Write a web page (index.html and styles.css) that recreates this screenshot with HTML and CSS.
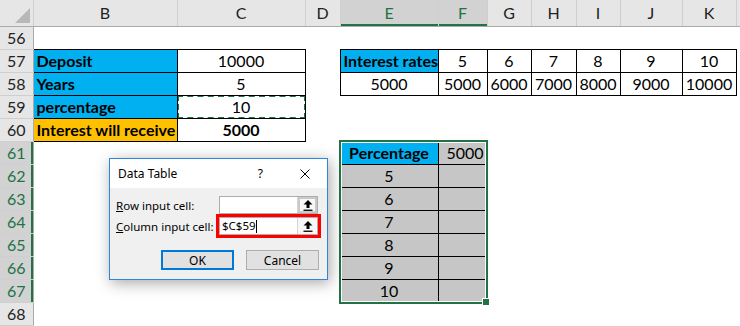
FILE: index.html
```html
<!DOCTYPE html>
<html>
<head>
  <title>Data Table</title>
  <link rel="stylesheet" href="styles.css">
</head>
<body>

  <div class="sheet">
    <table class="grid">
      <colgroup>
        <col class="w-hd"><col class="w-b"><col class="w-c"><col class="w-d"><col class="w-e"><col class="w-f">
        <col class="w-g"><col class="w-h"><col class="w-i"><col class="w-j"><col class="w-k"><col class="w-end">
      </colgroup>
      <tr class="cols">
        <th class="corner"><svg width="33" height="26" viewBox="0 0 33 26"><polygon points="30,8 30,23 15,23" fill="#b8b8b8"/></svg></th>
        <th>B</th><th>C</th><th>D</th><th class="sel">E</th><th class="sel">F</th>
        <th>G</th><th>H</th><th>I</th><th>J</th><th>K</th><th class="end"></th>
      </tr>
      <tr>
        <th class="rh">56</th>
        <td></td><td></td><td></td><td></td><td></td><td></td><td></td><td></td><td></td><td></td><td></td>
      </tr>
      <tr>
        <th class="rh">57</th>
        <td class="bx cyan left">Deposit</td><td class="bx">10000</td><td></td>
        <td class="bx cyan left">Interest rates</td><td class="bx">5</td><td class="bx">6</td><td class="bx">7</td><td class="bx">8</td><td class="bx">9</td><td class="bx">10</td><td></td>
      </tr>
      <tr>
        <th class="rh">58</th>
        <td class="bx cyan left">Years</td><td class="bx">5</td><td></td>
        <td class="bx">5000</td><td class="bx">5000</td><td class="bx">6000</td><td class="bx">7000</td><td class="bx">8000</td><td class="bx">9000</td><td class="bx">10000</td><td></td>
      </tr>
      <tr>
        <th class="rh">59</th>
        <td class="bx cyan left">percentage</td><td class="bx ants">10</td><td></td>
        <td></td><td></td><td></td><td></td><td></td><td></td><td></td><td></td>
      </tr>
      <tr>
        <th class="rh">60</th>
        <td class="bx orange left">Interest will receive</td><td class="bx bold">5000</td><td></td>
        <td></td><td></td><td></td><td></td><td></td><td></td><td></td><td></td>
      </tr>
      <tr>
        <th class="rh on">61</th>
        <td></td><td></td><td></td>
        <td class="bx cyan">Percentage</td><td class="bx shade right">5000</td>
        <td></td><td></td><td></td><td></td><td></td><td></td>
      </tr>
      <tr>
        <th class="rh on">62</th>
        <td></td><td></td><td></td>
        <td class="bx shade">5</td><td class="bx shade"></td>
        <td></td><td></td><td></td><td></td><td></td><td></td>
      </tr>
      <tr>
        <th class="rh on">63</th>
        <td></td><td></td><td></td>
        <td class="bx shade">6</td><td class="bx shade"></td>
        <td></td><td></td><td></td><td></td><td></td><td></td>
      </tr>
      <tr>
        <th class="rh on">64</th>
        <td></td><td></td><td></td>
        <td class="bx shade">7</td><td class="bx shade"></td>
        <td></td><td></td><td></td><td></td><td></td><td></td>
      </tr>
      <tr>
        <th class="rh on">65</th>
        <td></td><td></td><td></td>
        <td class="bx shade">8</td><td class="bx shade"></td>
        <td></td><td></td><td></td><td></td><td></td><td></td>
      </tr>
      <tr>
        <th class="rh on">66</th>
        <td></td><td></td><td></td>
        <td class="bx shade">9</td><td class="bx shade"></td>
        <td></td><td></td><td></td><td></td><td></td><td></td>
      </tr>
      <tr>
        <th class="rh on">67</th>
        <td></td><td></td><td></td>
        <td class="bx shade">10</td><td class="bx shade"></td>
        <td></td><td></td><td></td><td></td><td></td><td></td>
      </tr>
      <tr>
        <th class="rh">68</th>
        <td></td><td></td><td></td><td></td><td></td><td></td><td></td><td></td><td></td><td></td><td></td>
      </tr>
    </table>

    <!-- selected range E61:F67 -->
    <div class="range"><span class="handle"></span></div>

    <!-- Data Table dialog -->
    <div class="dialog">
      <div class="dlg-title">
        <span class="dlg-name">Data Table</span>
        <span class="dlg-help">?</span>
        <svg class="dlg-close" width="10" height="10" viewBox="0 0 10 10"><path d="M0.5 0.5 L9.5 9.5 M9.5 0.5 L0.5 9.5" stroke="#000" stroke-width="1" fill="none"/></svg>
      </div>
      <div class="dlg-body">
        <div class="dlg-row">
          <label><u>R</u>ow input cell:</label>
          <div class="field">
            <span class="val"></span>
            <span class="pick pick-on"><svg width="10" height="11" viewBox="0 0 10 11"><path d="M5 0 L9.5 4.5 H6.5 V8 H3.5 V4.5 H0.5 Z" fill="#000"/><rect x="0.5" y="9.6" width="9" height="1.3" fill="#000"/></svg></span>
          </div>
        </div>
        <div class="dlg-row">
          <label><u>C</u>olumn input cell:</label>
          <div class="field marked">
            <span class="val">$C$59<i class="caret"></i></span>
            <span class="pick"><svg width="10" height="11" viewBox="0 0 10 11"><path d="M5 0 L9.5 4.5 H6.5 V8 H3.5 V4.5 H0.5 Z" fill="#000"/><rect x="0.5" y="9.6" width="9" height="1.3" fill="#000"/></svg></span>
          </div>
        </div>
        <div class="dlg-btns">
          <button type="button" class="btn ok">OK</button>
          <button type="button" class="btn">Cancel</button>
        </div>
      </div>
    </div>
  </div>

</body>
</html>
```

FILE: styles.css
```css
body {
  margin: 0;
  overflow: hidden;
  background-color: #fff;
  font-family: Lato, "Liberation Sans", sans-serif;
  color: #000;
}

.sheet {
  position: relative;
  width: 740px;
  height: 326px;
  overflow: hidden;
}

/* worksheet grid */
.grid {
  border-collapse: collapse;
  table-layout: fixed;
  width: 740px;
  font-size: 16px;
}

.w-hd { width: 33px; }
.w-b { width: 144px; }
.w-c { width: 128px; }
.w-d { width: 35px; }
.w-e { width: 98px; }
.w-f { width: 49px; }
.w-g { width: 44px; }
.w-h { width: 45px; }
.w-i { width: 44px; }
.w-j { width: 62px; }
.w-k { width: 54px; }
.w-end { width: 4px; }

.grid tr {
  height: 23px;
}

.grid th,
.grid td {
  padding: 0 3px;
  line-height: 20px;
  text-align: center;
  font-weight: normal;
  white-space: nowrap;
  overflow: hidden;
}

.grid .cols {
  height: 26px;
}

.cols th {
  background-color: #e6e6e6;
  color: #222;
  border-right: 1px solid #cfcfcf;
  border-bottom: 1px solid #ababab;
}

.cols th.corner {
  padding: 0;
  line-height: 0;
}

.cols th.sel {
  background-color: #d2d2d2;
  color: #217346;
  box-shadow: inset 0 -2px 0 #217346;
}

.cols th.end {
  border-right: none;
}

.rh {
  padding: 0;
  background-color: #e6e6e6;
  color: #222;
  border-bottom: 1px solid #cfcfcf;
  border-right: 1px solid #ababab;
}

.rh.on {
  background-color: #d2d2d2;
  color: #217346;
  box-shadow: inset -2px 0 0 #217346;
}

/* cell formats */
.grid td.bx {
  border: 1px solid #000;
}

.grid td.cyan {
  background-color: #00b0f0;
  font-weight: bold;
}

.grid td.orange {
  background-color: #ffc000;
  font-weight: bold;
}

.grid td.left {
  text-align: left;
  padding-left: 3px;
  padding-right: 0;
}

.grid td.right {
  text-align: right;
}

.grid td.shade {
  background-color: #c6c6c6;
}

.grid td.bold {
  font-weight: bold;
}

/* copy marquee on C59 */
.ants {
  position: relative;
}

.ants::before,
.ants::after {
  content: "";
  position: absolute;
  top: -1px;
  left: -1px;
  right: -1px;
  bottom: -1px;
}

.ants::before {
  border: 2px solid #fff;
}

.ants::after {
  border: 2px dashed #217346;
}

/* selection E61:F67 */
.range {
  position: absolute;
  left: 339px;
  top: 140px;
  width: 149px;
  height: 164px;
  box-sizing: border-box;
  border: 2px solid #217346;
  box-shadow: inset 0 0 0 1px #fff;
}

.handle {
  position: absolute;
  right: -4px;
  bottom: -4px;
  width: 6px;
  height: 6px;
  background-color: #217346;
  border: 1px solid #fff;
}

/* dialog */
.dialog {
  position: absolute;
  left: 109px;
  top: 158px;
  width: 219px;
  height: 122px;
  box-sizing: border-box;
  border: 1px solid #2e86d6;
  background-color: #f0f0f0;
  box-shadow: 2px 3px 14px rgba(0, 0, 0, 0.35);
  font-family: "Noto Sans", "Open Sans", sans-serif;
  font-size: 11.5px;
}

.dlg-title {
  display: flex;
  align-items: center;
  height: 29px;
  padding: 0 17px 0 8px;
  background-color: #fff;
  font-size: 12px;
}

.dlg-name {
  flex: 1;
}

.dlg-help {
  margin-right: 37px;
}

.dlg-body {
  display: flex;
  flex-direction: column;
  gap: 3px;
  padding: 8px 8px 0 6px;
}

.dlg-row {
  display: flex;
  align-items: center;
}

.dlg-row label {
  width: 103px;
}

.field {
  display: flex;
  width: 99px;
  height: 18px;
  box-sizing: border-box;
  border: 1px solid #adadad;
  background-color: #fff;
}

.field.marked {
  outline: 3px solid #ff0000;
}

.val {
  flex: 1;
  padding-left: 2px;
  line-height: 16px;
}

.caret {
  display: inline-block;
  width: 1px;
  height: 13px;
  background-color: #000;
  vertical-align: middle;
}

.pick {
  display: flex;
  align-items: center;
  justify-content: center;
  width: 19px;
  border-left: 1px solid #d4d4d4;
  background-color: #f7f7f7;
}

.pick-on {
  box-shadow: inset 0 0 0 2px #c9c9c9;
}

.dlg-btns {
  display: flex;
  justify-content: flex-end;
  gap: 12px;
  margin-top: 12px;
}

.btn {
  width: 73px;
  height: 20px;
  box-sizing: border-box;
  padding: 0;
  border: 1px solid #adadad;
  background-color: #e1e1e1;
  font-family: inherit;
  font-size: 12px;
  color: #000;
}

.btn.ok {
  border: 2px solid #0078d7;
}
```
